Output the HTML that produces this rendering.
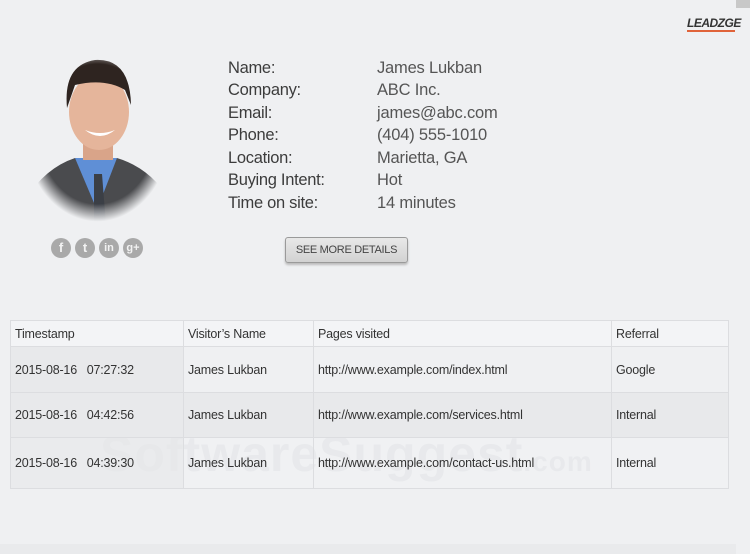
<!DOCTYPE html>
<html><head><style>
body{margin:0;width:750px;height:554px;background:#eff0f2;font-family:"Liberation Sans",sans-serif;color:#444;position:relative;overflow:hidden}
.a{position:absolute}
.lbl{position:absolute;left:228px;font-size:16.5px;color:#3c3c3c;letter-spacing:-0.3px}
.val{position:absolute;left:377px;font-size:16.5px;color:#555;letter-spacing:-0.2px}
table{position:absolute;left:10px;top:320px;width:719px;border-collapse:collapse;font-size:12.5px;color:#333;letter-spacing:-0.2px}
td{border:1px solid #dcdde0;padding:0 0 0 4px}
.soc{position:absolute;top:238px;width:20px;height:20px;border-radius:50%;background:#a9a9a9;color:#f2f2f2;font-size:13px;font-weight:bold;text-align:center;line-height:20px}
.ph{position:absolute;left:25px;top:50px;width:145px;height:175px;-webkit-mask-image:radial-gradient(ellipse 50% 50% at 50% 48%,#000 80%,transparent 100%);mask-image:radial-gradient(ellipse 50% 50% at 50% 48%,#000 80%,transparent 100%)}
</style></head><body>
<div class="a" style="left:736px;top:0;width:14px;height:8px;background:#c8c8c8"></div>
<div class="a" style="left:687px;top:16px;font-size:12px;font-style:italic;font-weight:bold;color:#333;letter-spacing:-0.5px">LEADZGE</div>
<div class="a" style="left:687px;top:30px;width:48px;height:2px;background:#e0633a"></div>

<div class="ph"><svg width="145" height="175">
<path d="M0 150 Q20 118 50 108 L92 108 Q125 118 145 150 L145 175 L0 175Z" fill="#4a4b4e"/>
<path d="M50 108 L72 160 L92 108Z" fill="#5f8fd6"/>
<path d="M69 124 L77 124 L81 175 L69 175Z" fill="#3b3f46"/>
<rect x="58" y="80" width="30" height="30" fill="#d9a489"/>
<ellipse cx="74" cy="62" rx="30" ry="38" fill="#e5b59b"/>
<path d="M42 58 Q38 15 70 10 Q105 8 106 55 L100 40 Q80 28 50 35 Z" fill="#2e2420"/>
<path d="M60 80 Q75 92 90 80 Q75 86 60 80Z" fill="#fff"/>
</svg></div>

<div class="soc" style="left:51px">f</div>
<div class="soc" style="left:75px">t</div>
<div class="soc" style="left:99px;font-size:11px">in</div>
<div class="soc" style="left:123px;font-size:11px">g+</div>

<div class="lbl" style="top:59px">Name:</div><div class="val" style="top:59px">James Lukban</div>
<div class="lbl" style="top:81px">Company:</div><div class="val" style="top:81px">ABC Inc.</div>
<div class="lbl" style="top:104px">Email:</div><div class="val" style="top:104px">james@abc.com</div>
<div class="lbl" style="top:126px">Phone:</div><div class="val" style="top:126px">(404) 555-1010</div>
<div class="lbl" style="top:149px">Location:</div><div class="val" style="top:149px">Marietta, GA</div>
<div class="lbl" style="top:171px">Buying Intent:</div><div class="val" style="top:171px">Hot</div>
<div class="lbl" style="top:194px">Time on site:</div><div class="val" style="top:194px">14 minutes</div>

<div class="a" style="left:285px;top:237px;width:121px;height:24px;border:1px solid #9a9a9a;border-radius:3px;background:linear-gradient(#e8e8e8,#d2d2d2);box-shadow:0 2px 2px #bbb;font-size:11px;color:#444;text-align:center;line-height:24px;letter-spacing:-0.3px">SEE MORE DETAILS</div>

<div class="a" style="left:100px;top:425px;font-size:50px;font-weight:bold;color:#dcdde0;letter-spacing:1px">SoftwareSuggest<span style="font-size:28px">.com</span></div>

<table>
<tr style="height:26px;background:#f3f4f6"><td style="width:168px">Timestamp</td><td style="width:125px">Visitor’s Name</td><td style="width:293px">Pages visited</td><td>Referral</td></tr>
<tr style="height:46px"><td style="background:#e8e9eb">2015-08-16&nbsp;&nbsp; 07:27:32</td><td>James Lukban</td><td>http://www.example.com/index.html</td><td>Google</td></tr>
<tr style="height:45px;background:#e8e9eb"><td>2015-08-16&nbsp;&nbsp; 04:42:56</td><td>James Lukban</td><td>http://www.example.com/services.html</td><td>Internal</td></tr>
<tr style="height:51px;background:rgba(240,241,243,0.6)"><td style="background:rgba(230,231,233,0.6)">2015-08-16&nbsp;&nbsp; 04:39:30</td><td>James Lukban</td><td>http://www.example.com/contact-us.html</td><td>Internal</td></tr>
</table>
<div class="a" style="left:0;top:544px;width:736px;height:10px;background:#e9eaec"></div>
</body></html>
